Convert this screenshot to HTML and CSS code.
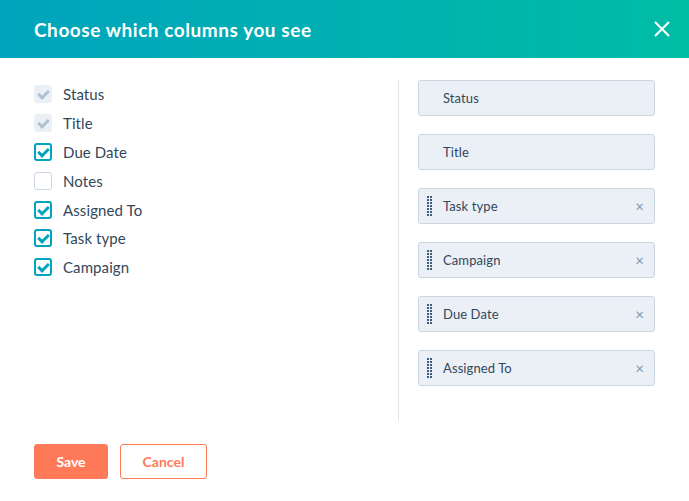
FILE: index.html
```html
<!DOCTYPE html>
<html lang="en">
<head>
    <meta charset="UTF-8">
    <title>Choose which columns you see</title>
    <link rel="stylesheet" href="styles.css">
</head>
<body>
    <div class="modal">
        <div class="modal-header">
            <h2>Choose which columns you see</h2>
            <button class="close-btn" aria-label="Close">
                <svg width="16" height="16" viewBox="0 0 16 16"><path d="M1 1L15 15M15 1L1 15" stroke="#fff" stroke-width="2" fill="none"/></svg>
            </button>
        </div>

        <div class="modal-body">
            <ul class="column-options">
                <li class="option disabled"><span class="check"></span>Status</li>
                <li class="option disabled"><span class="check"></span>Title</li>
                <li class="option checked"><span class="check"></span>Due Date</li>
                <li class="option"><span class="check"></span>Notes</li>
                <li class="option checked"><span class="check"></span>Assigned To</li>
                <li class="option checked"><span class="check"></span>Task type</li>
                <li class="option checked"><span class="check"></span>Campaign</li>
            </ul>

            <ul class="selected-columns">
                <li class="column-item locked">Status</li>
                <li class="column-item locked">Title</li>
                <li class="column-item"><span class="handle"></span><span class="column-name">Task type</span><span class="remove">&#215;</span></li>
                <li class="column-item"><span class="handle"></span><span class="column-name">Campaign</span><span class="remove">&#215;</span></li>
                <li class="column-item"><span class="handle"></span><span class="column-name">Due Date</span><span class="remove">&#215;</span></li>
                <li class="column-item"><span class="handle"></span><span class="column-name">Assigned To</span><span class="remove">&#215;</span></li>
            </ul>
        </div>

        <div class="modal-footer">
            <button class="btn btn-primary">Save</button>
            <button class="btn btn-secondary">Cancel</button>
        </div>
    </div>
</body>
</html>
```

FILE: styles.css
```css
* {
    margin: 0;
    padding: 0;
    box-sizing: border-box;
    font-family: 'Lato', 'Open Sans', sans-serif;
}

body {
    background: white;
    color: #33475b;
}

.modal {
    width: 689px;
    height: 501px;
    display: flex;
    flex-direction: column;
}

.modal-header {
    height: 58px;
    background: linear-gradient(90deg, #00a4bd 0%, #00bda5 100%);
    display: flex;
    align-items: center;
    justify-content: space-between;
    padding: 0 19px 0 34px;
}

.modal-header h2 {
    color: white;
    font-size: 19px;
    font-weight: 700;
    letter-spacing: 0.55px;
}

.close-btn {
    background: none;
    border: none;
    width: 16px;
    height: 16px;
    display: flex;
}

.modal-body {
    display: flex;
    padding: 22px 34px 0 34px;
    height: 363px;
}

.column-options {
    list-style: none;
    width: 365px;
    border-right: 1px solid #dfe3eb;
}

.option {
    display: flex;
    align-items: center;
    height: 28.8px;
    font-size: 15px;
    letter-spacing: 0.1px;
}

.check {
    width: 18px;
    height: 18px;
    border: 1px solid #cbd6e2;
    border-radius: 3px;
    margin-right: 11px;
    position: relative;
    background: white;
}

.option.checked .check {
    border: 2px solid #00a4bd;
}

.option.disabled .check {
    background: #eaf0f6;
    border-color: #eaf0f6;
}

.option.checked .check::after,
.option.disabled .check::after {
    content: '';
    position: absolute;
    left: 4px;
    top: 1px;
    width: 4px;
    height: 8px;
    border: solid #00a4bd;
    border-width: 0 3px 3px 0;
    transform: rotate(45deg);
}

.option.disabled .check::after {
    left: 5px;
    top: 2px;
    border-color: #b0c1d4;
}

.selected-columns {
    list-style: none;
    margin-left: 19px;
    width: 237px;
}

.column-item {
    height: 36px;
    background: #eaf0f6;
    border: 1px solid #cbd6e2;
    border-radius: 3px;
    margin-bottom: 18px;
    display: flex;
    align-items: center;
    padding: 0 10px 0 8px;
    font-size: 13px;
    letter-spacing: 0.1px;
}

.column-item.locked {
    padding-left: 24px;
}

.handle {
    width: 5px;
    height: 21px;
    margin-right: 11px;
    background-image: radial-gradient(circle at 1px 1px, #425b76 1px, transparent 1.4px);
    background-size: 3px 3px;
}

.column-name {
    flex: 1;
}

.remove {
    color: #7c98b6;
    font-size: 15px;
}

.modal-footer {
    display: flex;
    gap: 12px;
    padding: 23px 34px 0 34px;
}

.btn {
    height: 35px;
    border-radius: 3px;
    font-size: 14px;
    font-weight: 700;
    cursor: pointer;
}

.btn-primary {
    width: 74px;
    background: #ff7a59;
    border: 1px solid #ff7a59;
    color: white;
}

.btn-secondary {
    width: 87px;
    background: white;
    border: 1px solid #ff7a59;
    color: #ff7a59;
}
```
